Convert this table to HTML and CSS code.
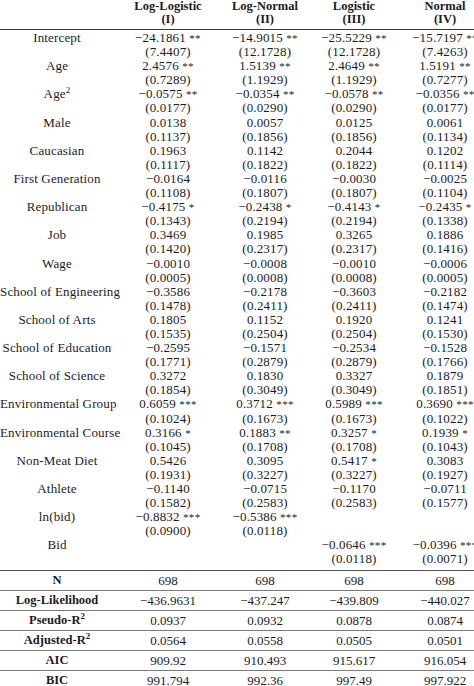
FILE: index.html
```html
<!DOCTYPE html>
<html lang="en">
<head>
<meta charset="utf-8">
<title>Regression results</title>
<link rel="stylesheet" href="styles.css">
</head>
<body>
<table class="results">
  <colgroup>
    <col class="c-label">
    <col class="c-one">
    <col class="c-two">
    <col class="c-three">
    <col class="c-four">
  </colgroup>
  <thead>
    <tr>
      <th></th>
      <th>Log-Logistic<br>(I)</th>
      <th>Log-Normal<br>(II)</th>
      <th>Logistic<br>(III)</th>
      <th>Normal<br>(IV)</th>
    </tr>
  </thead>
  <tbody class="coef">
    <tr><td>Intercept</td><td>−24.1861 <span class="s">**</span><br>(7.4407)</td><td>−14.9015 <span class="s">**</span><br>(12.1728)</td><td>−25.5229 <span class="s">**</span><br>(12.1728)</td><td>−15.7197 <span class="s">**</span><br>(7.4263)</td></tr>
    <tr><td>Age</td><td>2.4576 <span class="s">**</span><br>(0.7289)</td><td>1.5139 <span class="s">**</span><br>(1.1929)</td><td>2.4649 <span class="s">**</span><br>(1.1929)</td><td>1.5191 <span class="s">**</span><br>(0.7277)</td></tr>
    <tr><td>Age<sup>2</sup></td><td>−0.0575 <span class="s">**</span><br>(0.0177)</td><td>−0.0354 <span class="s">**</span><br>(0.0290)</td><td>−0.0578 <span class="s">**</span><br>(0.0290)</td><td>−0.0356 <span class="s">**</span><br>(0.0177)</td></tr>
    <tr><td>Male</td><td>0.0138<br>(0.1137)</td><td>0.0057<br>(0.1856)</td><td>0.0125<br>(0.1856)</td><td>0.0061<br>(0.1134)</td></tr>
    <tr><td>Caucasian</td><td>0.1963<br>(0.1117)</td><td>0.1142<br>(0.1822)</td><td>0.2044<br>(0.1822)</td><td>0.1202<br>(0.1114)</td></tr>
    <tr><td>First Generation</td><td>−0.0164<br>(0.1108)</td><td>−0.0116<br>(0.1807)</td><td>−0.0030<br>(0.1807)</td><td>−0.0025<br>(0.1104)</td></tr>
    <tr><td>Republican</td><td>−0.4175 <span class="s">*</span><br>(0.1343)</td><td>−0.2438 <span class="s">*</span><br>(0.2194)</td><td>−0.4143 <span class="s">*</span><br>(0.2194)</td><td>−0.2435 <span class="s">*</span><br>(0.1338)</td></tr>
    <tr><td>Job</td><td>0.3469<br>(0.1420)</td><td>0.1985<br>(0.2317)</td><td>0.3265<br>(0.2317)</td><td>0.1886<br>(0.1416)</td></tr>
    <tr><td>Wage</td><td>−0.0010<br>(0.0005)</td><td>−0.0008<br>(0.0008)</td><td>−0.0010<br>(0.0008)</td><td>−0.0006<br>(0.0005)</td></tr>
    <tr><td>School of Engineering</td><td>−0.3586<br>(0.1478)</td><td>−0.2178<br>(0.2411)</td><td>−0.3603<br>(0.2411)</td><td>−0.2182<br>(0.1474)</td></tr>
    <tr><td>School of Arts</td><td>0.1805<br>(0.1535)</td><td>0.1152<br>(0.2504)</td><td>0.1920<br>(0.2504)</td><td>0.1241<br>(0.1530)</td></tr>
    <tr><td>School of Education</td><td>−0.2595<br>(0.1771)</td><td>−0.1571<br>(0.2879)</td><td>−0.2534<br>(0.2879)</td><td>−0.1528<br>(0.1766)</td></tr>
    <tr><td>School of Science</td><td>0.3272<br>(0.1854)</td><td>0.1830<br>(0.3049)</td><td>0.3327<br>(0.3049)</td><td>0.1879<br>(0.1851)</td></tr>
    <tr><td>Environmental Group</td><td>0.6059 <span class="s">***</span><br>(0.1024)</td><td>0.3712 <span class="s">***</span><br>(0.1673)</td><td>0.5989 <span class="s">***</span><br>(0.1673)</td><td>0.3690 <span class="s">***</span><br>(0.1022)</td></tr>
    <tr><td>Environmental Course</td><td>0.3166 <span class="s">*</span><br>(0.1045)</td><td>0.1883 <span class="s">**</span><br>(0.1708)</td><td>0.3257 <span class="s">*</span><br>(0.1708)</td><td>0.1939 <span class="s">*</span><br>(0.1043)</td></tr>
    <tr><td>Non-Meat Diet</td><td>0.5426<br>(0.1931)</td><td>0.3095<br>(0.3227)</td><td>0.5417 <span class="s">*</span><br>(0.3227)</td><td>0.3083<br>(0.1927)</td></tr>
    <tr><td>Athlete</td><td>−0.1140<br>(0.1582)</td><td>−0.0715<br>(0.2583)</td><td>−0.1170<br>(0.2583)</td><td>−0.0711<br>(0.1577)</td></tr>
    <tr><td>ln(bid)</td><td>−0.8832 <span class="s">***</span><br>(0.0900)</td><td>−0.5386 <span class="s">***</span><br>(0.0118)</td><td></td><td></td></tr>
    <tr><td>Bid</td><td></td><td></td><td>−0.0646 <span class="s">***</span><br>(0.0118)</td><td>−0.0396 <span class="s">***</span><br>(0.0071)</td></tr>
  </tbody>
  <tbody class="stats">
    <tr><th>N</th><td>698</td><td>698</td><td>698</td><td>698</td></tr>
    <tr><th>Log-Likelihood</th><td>−436.9631</td><td>−437.247</td><td>−439.809</td><td>−440.027</td></tr>
    <tr><th>Pseudo-R<sup>2</sup></th><td>0.0937</td><td>0.0932</td><td>0.0878</td><td>0.0874</td></tr>
    <tr><th>Adjusted-R<sup>2</sup></th><td>0.0564</td><td>0.0558</td><td>0.0505</td><td>0.0501</td></tr>
    <tr><th>AIC</th><td>909.92</td><td>910.493</td><td>915.617</td><td>916.054</td></tr>
    <tr><th>BIC</th><td>991.794</td><td>992.36</td><td>997.49</td><td>997.922</td></tr>
  </tbody>
</table>
</body>
</html>
```

FILE: styles.css
```css
html, body {
  margin: 0;
  padding: 0;
  background: #ffffff;
}

body {
  width: 474px;
  height: 686px;
  overflow: hidden;
  font-family: "Liberation Serif", "Times New Roman", serif;
  color: #1c1c1c;
}

.results {
  table-layout: fixed;
  border-collapse: collapse;
  width: 490px;
  font-size: 13px;
}

.c-label { width: 114px; }
.c-one { width: 108px; }
.c-two { width: 86px; }
.c-three { width: 92px; }
.c-four { width: 90px; }

.results td,
.results th {
  padding: 0;
  text-align: center;
  vertical-align: top;
  white-space: nowrap;
}

.results thead th {
  font-weight: bold;
  font-size: 12.5px;
  line-height: 13px;
  padding-bottom: 3px;
  border-bottom: 1px solid #3a3a3a;
}

.coef td {
  line-height: 14.1px;
  letter-spacing: 0.15px;
}

.coef tr:first-child td {
  padding-top: 1px;
}

.coef tr:last-child td {
  padding-bottom: 3px;
}

.s {
  font-size: 11px;
  letter-spacing: 0.3px;
}

.results sup {
  font-size: 9px;
  line-height: 0;
  vertical-align: 5px;
}

.stats tr {
  border-top: 1px solid #7a7a7a;
}

.stats tr:first-child {
  border-top: 1.5px solid #555555;
}

.stats th,
.stats td {
  height: 19px;
  line-height: 19px;
  vertical-align: middle;
}

.stats th {
  font-weight: bold;
  font-size: 12.5px;
}
```
